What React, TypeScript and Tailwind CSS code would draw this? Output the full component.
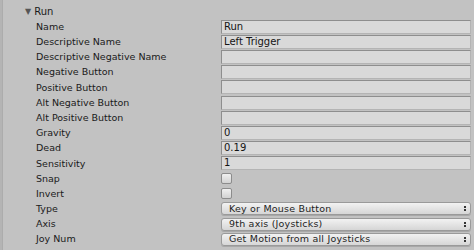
import React from 'react';

type Row =
  | { label: string; kind: 'text'; value?: string }
  | { label: string; kind: 'check' }
  | { label: string; kind: 'select'; value: string };

const rows: Row[] = [
  { label: 'Name', kind: 'text', value: 'Run' },
  { label: 'Descriptive Name', kind: 'text', value: 'Left Trigger' },
  { label: 'Descriptive Negative Name', kind: 'text' },
  { label: 'Negative Button', kind: 'text' },
  { label: 'Positive Button', kind: 'text' },
  { label: 'Alt Negative Button', kind: 'text' },
  { label: 'Alt Positive Button', kind: 'text' },
  { label: 'Gravity', kind: 'text', value: '0' },
  { label: 'Dead', kind: 'text', value: '0.19' },
  { label: 'Sensitivity', kind: 'text', value: '1' },
  { label: 'Snap', kind: 'check' },
  { label: 'Invert', kind: 'check' },
  { label: 'Type', kind: 'select', value: 'Key or Mouse Button' },
  { label: 'Axis', kind: 'select', value: '9th axis (Joysticks)' },
  { label: 'Joy Num', kind: 'select', value: 'Get Motion from all Joysticks' },
];

function Field({ row }: { row: Row }) {
  if (row.kind === 'check') {
    return (
      <div className="w-[11px] h-[11px] rounded-[2px] border border-[#8c8c8c] bg-gradient-to-b from-[#f0f0f0] to-[#d2d2d2]" />
    );
  }
  if (row.kind === 'select') {
    return (
      <div className="flex-1 h-[13px] flex items-center justify-between rounded-[3px] border border-[#9a9a9a] bg-gradient-to-b from-[#f2f2f2] to-[#d6d6d6] pl-[7px] pr-[4px] shadow-[0_1px_0_#a8a8a8]">
        <span className="text-[9.5px] leading-none text-[#1e1e1e] tracking-[0.2px]">{row.value}</span>
        <span className="flex flex-col gap-[1px]">
          <span className="block w-[2px] h-[2px] bg-[#333]" />
          <span className="block w-[2px] h-[2px] bg-[#333]" />
        </span>
      </div>
    );
  }
  return (
    <div className="flex-1 h-[14px] flex items-center border border-[#8e8e8e] border-b-[#b4b4b4] border-r-[#b4b4b4] bg-[#d9d9d9] pl-[2px]">
      <span className="text-[10px] leading-none text-[#141414]">{row.value}</span>
    </div>
  );
}

export default function App() {
  return (
    <div
      className="w-[474px] h-[250px] bg-[#c2c2c2] flex overflow-hidden"
      style={{ fontFamily: '"DejaVu Sans", Verdana, sans-serif' }}
    >
      <div className="w-[3px] bg-[#b4b4b4] border-r border-[#acacac]" />
      <div className="flex-1 flex flex-col pt-[4px]">
        <div className="h-[15px] flex items-center pl-[22px] gap-[3px] text-[10px] text-[#1a1a1a]">
          <span className="text-[8px] text-[#555]">▼</span>
          <span>Run</span>
        </div>
        {rows.map((row) => (
          <div key={row.label} className="h-[15.2px] flex items-center">
            <div className="w-[218px] pl-[33px] text-[9.5px] leading-none text-[#1a1a1a]">
              {row.label}
            </div>
            <div className="flex-1 flex items-center pr-[3px]">
              <Field row={row} />
            </div>
          </div>
        ))}
      </div>
    </div>
  );
}
